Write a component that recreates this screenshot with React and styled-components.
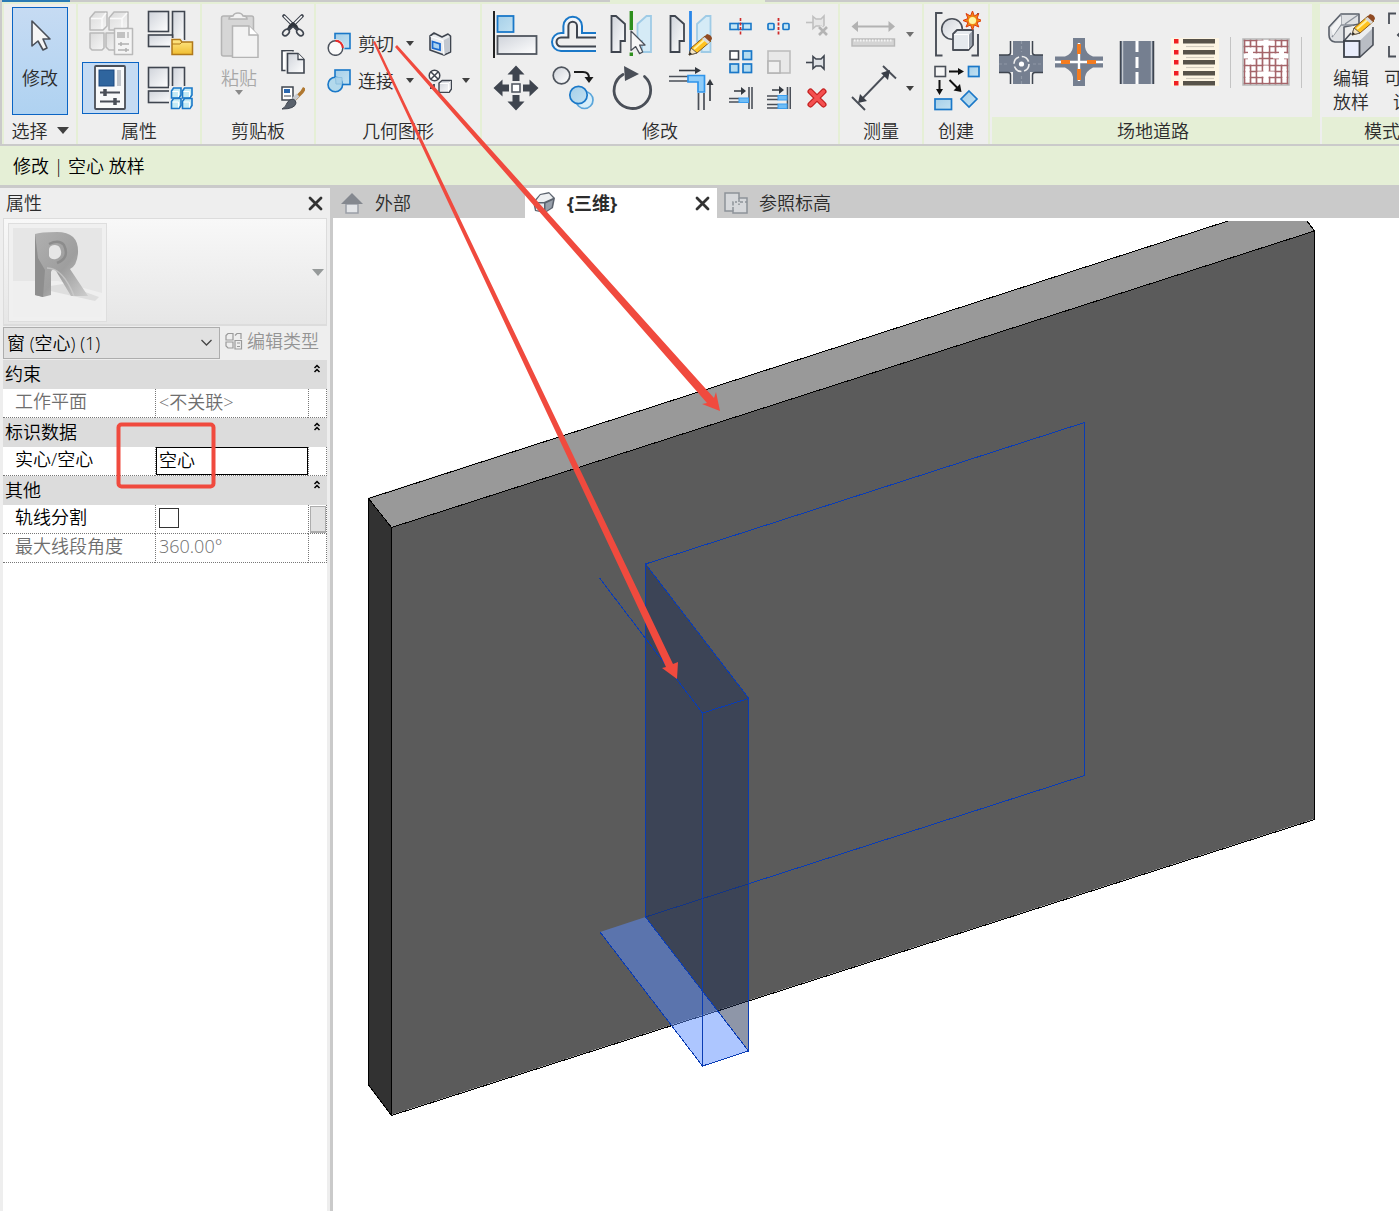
import React from 'react';
import styled, { createGlobalStyle } from 'styled-components';

const c = {
  panel: '#eeeeee',
  green: '#e5efd6',
  line: '#cacaca',
  text: '#2c2c2c',
  dim: '#949494',
  accent: '#0a64c4',
  ink: '#3f454f',
  blue: '#1a78c8',
  sky: '#aed8ee',
  red: '#f04a3e',
};

const GlobalStyle = createGlobalStyle`
  *, *::before, *::after { box-sizing: border-box; }
  html, body { margin: 0; padding: 0; }
  body {
    font-family: 'Open Sans', 'Noto Sans CJK SC', sans-serif;
    font-size: 18px;
    font-weight: 350;
    line-height: 24px;
    color: ${c.text};
    background: #fff;
    overflow: hidden;
  }
  button, input, select { font: inherit; color: inherit; margin: 0; padding: 0; border: 0; background: none; border-radius: 0; }
`;

const Page = styled.div`
  position: relative;
  display: flex;
  flex-direction: column;
  min-height: 100vh;
  overflow: hidden;
`;

/* ---------- ribbon ---------- */

const TabStrip = styled.div`
  display: flex;
  height: 2px;
  padding-left: 2px;
  background: ${c.line};
`;
const TabMark = styled.span`
  width: ${(p) => p.$width}px;
  margin-left: ${(p) => p.$gap || 0}px;
  background: ${(p) => p.$color};
`;
const Ribbon = styled.header`
  display: flex;
  gap: 2px;
  padding: 2px 0 0 2px;
  border-left: 2px solid ${c.line};
  border-bottom: 2px solid ${c.line};
  background: ${c.green};
  overflow: hidden;
`;
const Panel = styled.section`
  flex: none;
  display: flex;
  flex-direction: column;
  width: ${(p) => p.$width}px;
  background: ${c.panel};
`;
const PanelBody = styled.div`
  display: flex;
  align-items: ${(p) => p.$align || 'flex-start'};
  height: 113px;
  padding: 3px 0 0 ${(p) => p.$left || 0}px;
  border-right: ${(p) => p.$edge || 0}px solid ${c.green};
`;
const PanelLabel = styled.h2`
  display: flex;
  justify-content: center;
  align-items: center;
  gap: 9px;
  height: 27px;
  margin: 0 0 0 ${(p) => (p.$tinted ? 2 : 0)}px;
  padding-right: ${(p) => (p.$tinted ? 4 : 0)}px;
  font-size: 18px;
  font-weight: 350;
  background: ${(p) => (p.$tinted ? c.green : 'transparent')};
`;
const ToolGrid = styled.div`
  display: grid;
  grid-template-columns: repeat(${(p) => p.$cols}, ${(p) => p.$cell}px);
  grid-auto-rows: ${(p) => p.$row}px;
  gap: ${(p) => p.$gap || 0};
  margin: ${(p) => p.$top || 0}px 0 0 ${(p) => p.$left || 0}px;
`;
const Tool = styled.button`
  display: flex;
  align-items: center;
  justify-content: center;
  width: ${(p) => (p.$width ? p.$width + 'px' : 'auto')};
  height: ${(p) => (p.$width ? '54px' : 'auto')};
  background: ${(p) => (p.$on ? '#c5dbf3' : 'transparent')};
  outline: ${(p) => (p.$on ? `1px solid ${c.accent}` : 'none')};
  outline-offset: -1px;
`;
const TallTool = styled.button`
  flex: none;
  display: flex;
  flex-direction: column;
  align-items: center;
  width: ${(p) => p.$width}px;
  height: 108px;
  padding-top: 2px;
  border: 1px solid ${(p) => (p.$on ? c.accent : 'transparent')};
  background: ${(p) => (p.$on ? 'linear-gradient(#c6dbf3, #afd2f1)' : 'transparent')};
  color: ${(p) => (p.disabled ? '#a8a8a8' : c.text)};
  white-space: nowrap;
  > svg:first-child { margin-bottom: 8px; }
`;
const LabelledTool = styled.button`
  display: flex;
  align-items: center;
  gap: 7px;
`;
const SplitRow = styled.div`
  display: flex;
  align-items: center;
  height: 37px;
`;
const CaretButton = styled.button`
  display: flex;
  align-items: center;
  justify-content: center;
  width: ${(p) => p.$width || 20}px;
  height: ${(p) => p.$height || 37}px;
`;
const SplitColumn = styled.div`
  margin: 18px 0 0 ${(p) => p.$left}px;
`;
const Divider = styled.span`
  width: 1px;
  height: 51px;
  margin: 0 6px;
  background: #c4c4c4;
`;
const RoadTools = styled.div`
  display: flex;
  align-items: center;
`;
const OptionsBar = styled.div`
  display: flex;
  align-items: center;
  height: 42px;
  padding: 0 13px;
  color: #000;
  background: ${c.green};
  border-bottom: 3px solid ${c.line};
`;

/* ---------- workspace ---------- */

const Workspace = styled.div`
  flex: 1;
  display: flex;
`;
const Sidebar = styled.aside`
  flex: none;
  display: flex;
  flex-direction: column;
  width: 333px;
  padding: 0 3px;
  background: ${c.panel};
  border-right: 3px solid ${c.line};
`;
const SideTitle = styled.div`
  display: flex;
  align-items: center;
  justify-content: space-between;
  height: 30px;
  padding: 0 4px 0 3px;
`;
const CloseButton = styled.button`
  display: flex;
`;
const TypePreview = styled.button`
  display: flex;
  align-items: center;
  justify-content: space-between;
  height: 108px;
  padding: 2px 2px 0 4px;
  border: 1px solid #dcdcdc;
  border-bottom-width: 2px;
  background: linear-gradient(#f8f8f8, #e6e6e6);
`;
const Thumb = styled.span`
  display: block;
  width: 99px;
  height: 99px;
  padding: 4px;
  border: 1px solid #dedede;
  background: #f0f0f0;
`;
const TypeRow = styled.div`
  display: flex;
  justify-content: space-between;
  height: 34px;
  padding: 1px 8px 1px 0;
`;
const SelectBox = styled.div`
  display: grid;
  align-items: center;
  width: 217px;
  background: #e1e1e1;
  border: 1px solid #adadad;
  > * { grid-area: 1 / 1; }
  > svg { justify-self: end; margin-right: 6px; pointer-events: none; }
`;
const TypeSelect = styled.select`
  appearance: none;
  width: 100%;
  height: 30px;
  padding-left: 3px;
  color: #000;
`;
const EditType = styled.button`
  display: flex;
  align-items: center;
  gap: 4px;
  height: 28px;
  color: ${c.dim};
`;
const Properties = styled.div`
  flex: 1;
  background: #fff;
`;
const PropTable = styled.table`
  width: 100%;
  table-layout: fixed;
  border-collapse: separate;
  border-spacing: 0;
  color: #000;
`;
const GroupCell = styled.th`
  height: 29px;
  padding: 0 6px 2px 2px;
  text-align: left;
  font-weight: 350;
  background: #dcdcdc;
`;
const GroupHead = styled.div`
  display: flex;
  align-items: center;
  justify-content: space-between;
`;
const FoldButton = styled.button`
  display: flex;
  padding-bottom: 11px;
`;
const NameCell = styled.th`
  height: 29px;
  padding: 0 0 4px 12px;
  text-align: left;
  font-weight: 350;
  color: ${(p) => (p.$dim ? '#6e6e6e' : '#000')};
  border-bottom: 1px dotted #777;
`;
const Cell = styled.td`
  height: 29px;
  padding: 0;
  border-left: 1px dotted #777;
  border-bottom: 1px dotted #777;
  ${(p) => p.$last && 'border-right: 1px dotted #777;'}
`;
const ValueInput = styled.input`
  display: block;
  width: 100%;
  height: 28px;
  padding: 0 2px 4px;
  border: 1px solid ${(p) => (p.$active ? '#000' : 'transparent')};
  color: #000;
  outline: none;
  &:disabled { color: #6e6e6e; }
`;
const TickBox = styled.input`
  display: block;
  appearance: none;
  width: 20px;
  height: 20px;
  margin: 0 0 2px 3px;
  border: 1px solid #333;
  background: #fff;
`;
const RowButton = styled.button`
  display: block;
  width: 16px;
  height: 27px;
  margin-left: 1px;
  background: #e1e1e1;
  border: 1px solid #adadad;
  border-bottom-width: 2px;
`;
const Main = styled.main`
  flex: 1;
  display: flex;
  flex-direction: column;
  min-width: 0;
`;
const ViewTabs = styled.nav`
  display: flex;
  height: 30px;
  background: ${c.line};
`;
const ViewTab = styled.div`
  display: flex;
  align-items: center;
  justify-content: space-between;
  width: 192px;
  padding: 0 7px;
  background: ${(p) => (p.$active ? '#fff' : 'transparent')};
`;
const ViewTabButton = styled.button`
  display: flex;
  align-items: center;
  gap: 11px;
  font-weight: ${(p) => (p.$active ? 700 : 350)};
`;
const Canvas = styled.div`
  flex: 1;
  overflow: hidden;
  background: #fff;
`;
const Drawing = styled.svg`
  display: block;
  flex: none;
  overflow: hidden;
`;
const Markup = styled.svg`
  position: absolute;
  top: 0;
  left: 0;
  pointer-events: none;
`;
const SharedDefs = styled.svg`
  position: absolute;
`;

/* ---------- icon drawings ---------- */

const Icon = ({ size = 48, w, h, children }) => (
  <Drawing width={w || size} height={h || size} viewBox={`0 0 ${w || size} ${h || size}`} fill="none" aria-hidden="true">
    {children}
  </Drawing>
);

const Caret = ({ w = 8, color = '#404040' }) => (
  <Icon w={w} h={w / 2 + 1}><path d={`M0 0H${w}L${w / 2} ${w / 2 + 1}Z`} fill={color} /></Icon>
);
const Cross = ({ size = 15 }) => (
  <Icon size={size}><path d="M2 2L13 13M13 2L2 13" stroke="#333" strokeWidth="2.8" strokeLinecap="round" /></Icon>
);
const Defs = () => (
  <SharedDefs width="0" height="0" aria-hidden="true">
    <defs>
      <linearGradient id="steel" x1="0" y1="0" x2="1" y2="1"><stop offset="0" stopColor="#cfd3da" /><stop offset="1" stopColor="#fff" /></linearGradient>
      <linearGradient id="pale" x1="0" y1="0" x2="1" y2="1"><stop offset="0" stopColor="#dadada" /><stop offset="1" stopColor="#f6f6f6" /></linearGradient>
      <linearGradient id="sky" x1="0" y1="0" x2="1" y2="1"><stop offset="0" stopColor="#a6cfe8" /><stop offset="1" stopColor="#c3e2f2" /></linearGradient>
      <linearGradient id="gold" x1="0" y1="0" x2="0" y2="1"><stop offset="0" stopColor="#ffe88a" /><stop offset="1" stopColor="#f0bd30" /></linearGradient>
      <linearGradient id="letter" x1="0" y1="0" x2="1" y2="1"><stop offset="0" stopColor="#b0b0b0" /><stop offset=".55" stopColor="#9e9e9e" /><stop offset="1" stopColor="#cecece" /></linearGradient>
    </defs>
  </SharedDefs>
);

const Pointer = ({ x, y, s = 1 }) => (
  <path transform={`translate(${x} ${y}) scale(${s})`} d="M0 0V25L6 20L11 29L15 27L11 18H18Z" fill="#f6f6f6" stroke="#4a4f58" strokeWidth="1.6" strokeLinejoin="round" />
);
const Pencil = ({ x = 0, y = 0 }) => (
  <g transform={`translate(${x} ${y})`}>
    <path d="M0 21L2 14L16 2L22 7L8 19Z" fill="#ffc21e" stroke="#8a5a1c" strokeWidth="1" />
    <path d="M5 15L17 4.500" stroke="#fff0a0" strokeWidth="2" />
    <path d="M14 4L18 0Q23 1 23 5L19.500 9Z" fill="#8f4a22" />
    <path d="M13 5L15.500 3L21 8L19 10Z" fill="#d8dadc" />
    <path d="M0 21L2 14L8 19Z" fill="#f7e6c4" stroke="#4a4a4a" strokeWidth=".8" />
    <path d="M0 21L.8 18L3 20Z" fill="#222" />
  </g>
);

const ModifyIcon = () => <Icon><Pointer x={16} y={11} /></Icon>;

const TypePropsIcon = () => (
  <Icon>
    <g fill="url(#pale)" stroke="#b9b9b9" strokeWidth="1.500" strokeLinejoin="round">
      <path d="M3 9L8 3H20V17L16 21H3Z" /><path d="M22 9L27 3H41V19L36 21H22Z" />
      <path d="M3 24H17V39L15 41H5L3 39Z" /><path d="M19 24H33V41H22L19 38Z" />
      <path d="M4 9.500H15L19 4M15 9.500V20M23 9.500H35L40 4M35 9.500V20" fill="none" stroke="#fafafa" />
      <rect x="27.500" y="19.500" width="18" height="26" fill="#f4f4f4" />
    </g>
    <rect x="30" y="23" width="8" height="6" fill="#c2c2c2" /><path d="M41 23V29" stroke="#ccc" strokeWidth="2" />
    <path d="M31 35H42M31 41H42M34 33V37M39 39V43" stroke="#b0b0b0" strokeWidth="1.500" />
  </Icon>
);
const Windows = ({ dy = 0 }) => (
  <g transform={`translate(0 ${dy})`} fill="url(#steel)" stroke={c.ink} strokeWidth="1.600">
    <rect x="2.500" y="2.500" width="20" height="20" /><path d="M26.500 2.500H38.500V34H26.500Z" /><rect x="2.500" y="26" width="24" height="11.500" />
  </g>
);
const FamilyFolderIcon = () => (
  <Icon><Windows />
    <path d="M26 31H35L37 33H46V45.500H26Z" fill="url(#gold)" stroke="#eee" strokeWidth="4" />
    <path d="M26 30.500H34L36 33H46.500V45.500H26Z" fill="url(#gold)" stroke="#b0781a" strokeWidth="1.500" /><path d="M26 35H34L36 33" stroke="#b0781a" />
  </Icon>
);
const PropertiesIcon = () => (
  <Icon>
    <rect x="8" y="2" width="30" height="43" rx="1" fill="#f8f9fa" stroke="#4a4f58" strokeWidth="1.800" />
    <rect x="12" y="6" width="15" height="16" fill="#2f659e" stroke="#1d4a82" /><rect x="30" y="6" width="4" height="16" fill="#c3c7cd" />
    <path d="M13 28.500H33M13 37.500H33" stroke="#4a4f58" strokeWidth="1.800" /><path d="M18 25V32M28 34V41" stroke="#4a4f58" strokeWidth="3.500" />
  </Icon>
);
const FamilyTypesIcon = () => (
  <Icon><Windows dy={1} />
    <rect x="23" y="22" width="25" height="25" fill="#eee" />
    <g fill="#c4ebf5" stroke={c.blue} strokeWidth="1.600">{[[25.5, 25], [36.5, 25], [25.5, 35.5], [36.5, 35.5]].map(([x, y]) => <g key={`${x}-${y}`}><path d={`M${x} ${y + 2}L${x + 2} ${y - 1}H${x + 9.5}V${y + 6}L${x + 7.5} ${y + 9}H${x}Z`} /><path d={`M${x + 1} ${y + 2.5}H${x + 7}V${y + 8}`} stroke="#fff" strokeWidth="1" fill="none" /></g>)}</g>
  </Icon>
);
const PasteIcon = () => (
  <Icon>
    <rect x="6.500" y="6" width="32" height="40" rx="2" fill="#d6d6d6" stroke="#b4b4b4" strokeWidth="1.500" />
    <path d="M14 9Q14 6 18 6Q19 3 23 3Q27 3 28 6Q32 6 32 9Z" fill="#f2f2f2" stroke="#b4b4b4" strokeWidth="1.500" />
    <path d="M17.500 16H34L43 25V47.500H17.500Z" fill="#f3f3f3" stroke="#b4b4b4" strokeWidth="1.500" /><path d="M34 16V25H43" fill="#fff" stroke="#b4b4b4" strokeWidth="1.500" />
  </Icon>
);
const CutIcon = () => (
  <Icon size={24}>
    <path d="M3 2L18 17M21 2L6 17" stroke={c.ink} strokeWidth="3.600" strokeLinecap="round" /><path d="M3.500 2.500L10 9M20.500 2.500L14 9" stroke="#fff" strokeWidth="1.500" strokeLinecap="round" />
    <path d="M8 11L12 8L16 11L18 15L12 12L6 15Z" fill="#2e333b" />
    <ellipse cx="5" cy="18.500" rx="3.800" ry="2.600" transform="rotate(-45 5 18.500)" fill="#eee" stroke={c.ink} strokeWidth="1.600" /><ellipse cx="19" cy="18.500" rx="3.800" ry="2.600" transform="rotate(45 19 18.500)" fill="#eee" stroke={c.ink} strokeWidth="1.600" />
  </Icon>
);
const CopyClipIcon = () => (
  <Icon size={24}>
    <path d="M1 .8H12V20.500H1Z" fill="#fff" stroke={c.ink} strokeWidth="1.600" />
    <path d="M6.500 3.500H17L23 9.500V23H6.500Z" fill="url(#steel)" stroke="#eee" strokeWidth="4" /><path d="M6.500 3.500H17L23 9.500V23H6.500Z" fill="url(#steel)" stroke={c.ink} strokeWidth="1.600" /><path d="M17 3.500V9.500H23" fill="#fff" stroke={c.ink} strokeWidth="1.300" />
  </Icon>
);
const MatchIcon = () => (
  <Icon size={24}>
    <rect x="1" y="1" width="11" height="13" fill="#fff" stroke={c.ink} strokeWidth="1.500" /><rect x="3" y="3" width="6" height="4" fill="#2b68b0" /><path d="M3 10H10" stroke={c.ink} />
    <path d="M14 13L21 6L23.500 2" stroke="#b07830" strokeWidth="3.500" /><path d="M12 14L17 9" stroke="#c9ccd1" strokeWidth="4" />
    <path d="M1 23Q5 21 6 17Q8 13 12 13Q15 14 15 17Q14 23 1 23Z" fill="#59616c" stroke={c.ink} />
  </Icon>
);
const CutGeomIcon = () => (
  <Icon size={24}>
    <rect x="8" y="1.500" width="15" height="15" fill="url(#sky)" stroke={c.blue} strokeWidth="1.600" /><circle cx="8.500" cy="16" r="9" fill="#eee" />
    <circle cx="8.500" cy="16" r="7.300" fill="#fafafa" stroke="#4c525c" strokeWidth="1.500" /><path d="M8.500 8.700A7.300 7.300 0 0 1 15.800 16" stroke="#f02a2a" strokeWidth="2" />
  </Icon>
);
const JoinIcon = () => (
  <Icon size={24}>
    <rect x="8" y="1" width="15" height="14.500" fill="url(#sky)" stroke={c.blue} strokeWidth="1.600" /><circle cx="8.300" cy="15.500" r="7.300" fill="#b3d9ec" stroke={c.blue} strokeWidth="1.600" />
    <path d="M8.500 8.500H15V15H9Z" fill="#a9d2ea" stroke="#8cc0df" />
  </Icon>
);
const WallOpeningIcon = () => (
  <Icon size={24}>
    <path d="M2 4L6 1L14 5L20 2L22.500 4V20L16 23L2 18Z" fill="#e9ecef" stroke={c.ink} strokeWidth="1.600" strokeLinejoin="round" /><path d="M15 8.500L22 5V19.500L16 22Z" fill="#c3c8cf" /><path d="M2.500 4.500L15 8.500L16 23" stroke="#fff" strokeWidth="1.200" />
    <path d="M4.500 9.500L12 12V18L4.500 16Z" fill="#a9d2f0" stroke="#1a6bd0" strokeWidth="1.800" />
  </Icon>
);
const SplitFaceIcon = () => (
  <Icon size={24}>
    <circle cx="6.500" cy="6.500" r="5.300" fill="#fff" stroke={c.ink} strokeWidth="1.500" /><path d="M3 3L10 10M10 3L3 10" stroke={c.ink} strokeWidth="1.500" />
    <path d="M1 14L6 19V15M6 19H2" stroke={c.ink} strokeWidth="1.800" />
    <path d="M11 14L14 11.500H23.500V20L21 23.500H11Z" fill="url(#steel)" stroke={c.ink} strokeWidth="1.400" strokeLinejoin="round" /><path d="M12 14.500H20.500V22.500M20.500 14.500L22.500 12.500" stroke="#fff" />
  </Icon>
);
const AlignIcon = () => (
  <Icon>
    <path d="M2 1V48" stroke="#222" strokeWidth="2" /><rect x="5.500" y="6" width="16" height="16" fill="url(#sky)" stroke={c.blue} strokeWidth="1.800" /><rect x="5.500" y="26" width="39" height="18" fill="url(#steel)" stroke="#4f555e" strokeWidth="1.800" />
  </Icon>
);
const OffsetIcon = () => (
  <Icon>
    <path d="M46 23H32V16A9.300 9.300 0 0 0 13.400 16V23H11A9 9 0 0 0 11 41H46" fill="#f2f6fa" stroke={c.blue} strokeWidth="2" />
    <path d="M46 27.500H27V16A4.300 4.300 0 0 0 18.400 16V27.500H11A4.300 4.300 0 0 0 11 36.500H46" fill="#eee" stroke={c.ink} strokeWidth="2" />
  </Icon>
);
const mirrorHalf = 'M3.500 6H8L17 14V31H12.500V42H3.500Z';
const MirrorPickIcon = () => (
  <Icon>
    <path d={mirrorHalf} fill="url(#steel)" stroke={c.ink} strokeWidth="1.800" /><path d={mirrorHalf} transform="matrix(-1 0 0 1 46.500 0)" fill="#d5ebf6" stroke="#9fcbe6" strokeWidth="1.800" />
    <path d="M23.300 1V20M23.300 42.500V46" stroke="#2f8f1e" strokeWidth="3.400" /><Pointer x={23} y={21} s={0.78} />
  </Icon>
);
const MirrorDrawIcon = () => (
  <Icon>
    <path d={mirrorHalf} transform="translate(1 0)" fill="url(#steel)" stroke={c.ink} strokeWidth="1.800" /><path d={mirrorHalf} transform="matrix(-1 0 0 1 48 0)" fill="#d5ebf6" stroke="#9fcbe6" strokeWidth="1.800" />
    <path d="M24.500 1V42" stroke="#2a86e8" strokeWidth="2.800" /><Pencil x={23} y={24} />
  </Icon>
);
const MoveIcon = () => (
  <Icon>
    {[0, 90, 180, 270].map((a) => <path key={a} transform={`rotate(${a} 24 24)`} d="M24 1.500L32.500 10.500H27.500V17H20.500V10.500H15.500Z" fill={c.ink} />)}
    <rect x="20" y="20" width="8" height="8" fill="#fff" stroke="#555b64" strokeWidth="1.600" />
  </Icon>
);
const CopyIcon = () => (
  <Icon>
    <circle cx="11.500" cy="11.500" r="8.300" fill="url(#steel)" stroke="#4f555e" strokeWidth="1.700" /><path d="M24 8H33Q39 8 39 14" stroke="#1c1c1c" strokeWidth="2" /><path d="M34.500 13H43.500L39 19Z" fill="#1c1c1c" />
    <circle cx="34.500" cy="36" r="8.500" fill="#d7eefa" stroke="#5aa5da" strokeWidth="1.700" /><circle cx="28.500" cy="31" r="8.700" fill="url(#sky)" stroke={c.blue} strokeWidth="1.700" />
  </Icon>
);
const RotateIcon = () => (
  <Icon><path d="M36.500 12.500A18.300 18.300 0 1 1 15 10.500" stroke="#4a4f58" strokeWidth="2.800" strokeLinecap="round" /><path d="M16 2L31 10L17 17Z" fill="#4a4f58" /></Icon>
);
const TrimIcon = () => (
  <Icon>
    <path d="M13 6.500H30" stroke="#33383f" strokeWidth="1.600" /><path d="M29 3L35 6.500L29 10Z" fill="#33383f" />
    <path d="M3 12.500H22M3 17H22M32.500 29V46M38 29V46" stroke="#4a4f58" strokeWidth="1.700" />
    <path d="M22 11.500H38.500V28H32V18H22Z" fill="#8fccf8" stroke="#2f94ea" strokeWidth="1.700" />
    <path d="M44 37V20" stroke="#33383f" strokeWidth="1.600" /><path d="M40.500 21L44 15L47.500 21Z" fill="#33383f" />
  </Icon>
);
const SplitIcon = () => (
  <Icon size={24}><rect x="1" y="9.500" width="8" height="6" fill="#c5e6f5" stroke={c.blue} strokeWidth="1.600" /><rect x="14" y="9.500" width="8" height="6" fill="#c5e6f5" stroke={c.blue} strokeWidth="1.600" /><path d="M9 9.500H14M9 15.500H14" stroke={c.blue} strokeWidth="1.600" /><path d="M11.500 4V21" stroke="#d02a2a" strokeWidth="1.600" strokeDasharray="3 1.500" /></Icon>
);
const SplitGapIcon = () => (
  <Icon size={24}><rect x="1" y="9.500" width="6" height="6" rx="1" fill="#c5e6f5" stroke={c.blue} strokeWidth="1.700" /><rect x="16" y="9.500" width="6" height="6" rx="1" fill="#c5e6f5" stroke={c.blue} strokeWidth="1.700" /><path d="M11.500 4V21" stroke="#d02a2a" strokeWidth="1.800" strokeDasharray="3 1.500" /></Icon>
);
const PinShape = ({ color, fill }) => (
  <><path d="M1 12.500H8" stroke={color} strokeWidth="1.600" /><path d="M8 6.500L11 9H16L19 6V19L16 16H11L8 18.500Z" fill={fill} stroke={color} strokeWidth="1.600" /></>
);
const PinIcon = () => <Icon size={24}><PinShape color={c.ink} fill="#dfe2e6" /></Icon>;
const UnpinIcon = () => (
  <Icon size={24}><g transform="translate(0 -4)"><PinShape color="#c0c0c0" fill="#e6e6e6" /></g><path d="M14 13L22 21M22 13L14 21" stroke="#eee" strokeWidth="5" /><path d="M14 13L22 21M22 13L14 21" stroke="#b4b4b4" strokeWidth="2.600" /></Icon>
);
const ArrayIcon = () => (
  <Icon size={24}><rect x="1" y="1" width="8.500" height="8.500" fill="#fff" stroke={c.ink} strokeWidth="1.600" />{[[14, 1], [1, 14], [14, 14]].map(([x, y]) => <rect key={`${x}-${y}`} x={x} y={y} width="8.500" height="8.500" fill="#b5dcf0" stroke={c.blue} strokeWidth="1.700" />)}</Icon>
);
const ScaleIcon = () => (
  <Icon size={24}><rect x="1" y="1" width="22" height="22" fill="#e8e8e8" stroke="#bdbdbd" strokeWidth="1.600" /><rect x="1" y="11" width="12" height="12" fill="#efefef" stroke="#b5b5b5" strokeWidth="1.600" /></Icon>
);
const ExtendOneIcon = () => (
  <Icon size={24}><path d="M5 5H14" stroke="#33383f" strokeWidth="1.500" /><path d="M12 1L17 5L12 9Z" fill="#33383f" /><path d="M0 12.500H10M0 16H10M20 1V23M23 1V23" stroke="#4a4f58" strokeWidth="1.600" /><rect x="10" y="12" width="9.500" height="4.500" fill="#6fbdf6" stroke="#3a9ef0" /></Icon>
);
const ExtendManyIcon = () => (
  <Icon size={24}><path d="M5 4H14" stroke="#33383f" strokeWidth="1.500" /><path d="M12 0L17 4L12 8Z" fill="#33383f" /><path d="M0 10H11M0 13.500H11M0 18.500H11M0 22H11M20.500 1V23M23.300 1V23" stroke="#4a4f58" strokeWidth="1.600" /><g fill="#6fbdf6" stroke="#3a9ef0"><rect x="11" y="9.500" width="9" height="4.500" /><rect x="11" y="18" width="9" height="4.500" /></g></Icon>
);
const DeleteIcon = () => (
  <Icon size={24}><path d="M5.500 5.500L18.500 18.500M18.500 5.500L5.500 18.500" stroke="#c42020" strokeWidth="6" strokeLinecap="round" /><path d="M5.500 5.500L18.500 18.500M18.500 5.500L5.500 18.500" stroke="#f45050" strokeWidth="3.600" strokeLinecap="round" /></Icon>
);
const MeasureIcon = () => (
  <Icon><path d="M7 16.500H41" stroke="#b2b2b2" strokeWidth="2" /><path d="M2.500 16.500L9 11V22ZM46 16.500L39.500 11V22Z" fill="#b2b2b2" /><rect x="3" y="29" width="42.500" height="7" fill="#d4d4d4" stroke="#b8b8b8" strokeWidth="1.400" /><path d="M5 30.500H44" stroke="#f4f4f4" strokeWidth="2" strokeDasharray="1.500 1.500" /></Icon>
);
const DimensionIcon = () => (
  <Icon><path d="M11 37L39 8M3 33L16 46M34 2L47 14.500" stroke="#4a4f58" strokeWidth="1.900" /><path d="M9 39L11 30L18 37ZM41 6L32 9L39 16Z" fill="#3a3f48" /></Icon>
);
const CreateGroupIcon = () => (
  <Icon>
    <path d="M9.500 3H3V45.500H9.500M38.500 45.500H45V24M45 3V5" stroke="#4a4f58" strokeWidth="1.900" /><circle cx="19" cy="19" r="10.300" fill="url(#steel)" stroke="#4a4f58" strokeWidth="1.600" />
    <path d="M20 24L24 20H40V35L35.500 40H20Z" fill="#e6eaee" stroke="#4a4f58" strokeWidth="1.800" strokeLinejoin="round" /><path d="M36 24.500L39 21.500V34.500L36 38Z" fill="#9aa1ab" /><path d="M21 24.500H35.500V39" stroke="#fff" />
    <path d="M39.500 1L41.300 6L45.800 3.500L44 8.500L49 10.500L44 12.500L45.800 17L41.300 15L39.500 20L37.500 15L33 17L35 12.500L30 10.500L35 8.500L33 3.500L37.500 6Z" fill="#f08a10" stroke="#e03a10" strokeWidth="1" /><circle cx="39.500" cy="10.500" r="3.600" fill="#fff6a0" />
  </Icon>
);
const CreateSimilarIcon = () => (
  <Icon>
    <rect x="2" y="2.500" width="10.500" height="10" fill="#f6f6f6" stroke="#4a4f58" strokeWidth="1.600" /><path d="M16 7.500H26M6.500 16V26M16.500 16L25 24.500" stroke="#111" strokeWidth="2" /><path d="M25 4L31 7.500L25 11ZM3 25L6.500 31L10 25ZM28.500 28L27 20L20.500 26.500Z" fill="#111" />
    <g stroke={c.blue} strokeWidth="1.700" fill="url(#sky)"><rect x="35.500" y="2.500" width="10.500" height="10" /><rect x="2" y="35" width="16.500" height="10.500" /><path d="M36 27L44 35L36 43L28 35Z" /></g>
  </Icon>
);
const road = '#757f90';
const RoundaboutIcon = () => (
  <Icon>
    <path d="M16 3H33V17H46V34H33V46H16V34H2V17H16Z" fill={road} />
    <path d="M13.500 3V14.500Q13.500 17 11 17H2M35.500 3V14.500Q35.500 17 38 17H46M13.500 46V37Q13.500 34.500 11 34.500H2M35.500 46V37Q35.500 34.500 38 34.500H46" stroke="#3f454f" strokeWidth="1.500" />
    <circle cx="24.500" cy="26" r="7.500" stroke="#eee" strokeWidth="1.600" strokeDasharray="9 2.800" /><circle cx="24.500" cy="26" r="2.600" fill="#fff" /><path d="M24.500 3V14M24.500 38V46M2 26H12M36 26H46" stroke="#8f98a6" strokeWidth="1.200" strokeDasharray="3 2" />
  </Icon>
);
const CrossroadIcon = () => (
  <Icon>
    <path d="M18 0H30V9Q31 16 38 18.500H48V29.500H38Q31 33 30 39V48H18V39Q17 33 10 29.500H0V18.500H10Q17 16 18 9Z" fill={road} /><path d="M24 5V43M0 24H48" stroke="#fff" strokeWidth="2.400" />
    <path d="M24 6V16M24 31V42M6 24H15M32 24H41" stroke="#f47c20" strokeWidth="4" />
  </Icon>
);
const StraightRoadIcon = () => (
  <Icon><rect x="7" y="3" width="34" height="43" fill={road} /><path d="M7.500 3V46M40.500 3V46" stroke="#3f454f" strokeWidth="1.500" /><path d="M9.700 3V46M38.300 3V46" stroke="#d5d9de" strokeWidth="1" /><path d="M24 3V14M24 19V30M24 34V46" stroke="#fff" strokeWidth="3" /></Icon>
);
const ParkingIcon = () => (
  <Icon>
    <rect width="48" height="48" fill="#fdf5e4" />
    {[1, 12, 22, 33, 43].map((y) => <g key={y}><rect x="3" y={y} width="4.500" height="4.500" fill="#f02020" /><rect x="12" y={y} width="32" height="4.500" fill="#575249" /></g>)}
    {[8, 19, 29, 40].map((y) => <path key={y} d={`M15 ${y}.500H43`} stroke="#d2cbbd" strokeWidth="1.200" />)}
  </Icon>
);
const latticeLines = [2.5, 8.5, 14.5, 20.5, 27.5, 33.5, 39.5, 45.5];
const latticeGaps = [[24, 5], [24, 36], [8.5, 18], [39.5, 18]];
const LatticeIcon = () => (
  <Icon>
    <rect x=".5" y=".5" width="47" height="47" fill="#fff" />
    {latticeLines.map((v) => <path key={v} d={`M${v} 1V47M1 ${v}H47`} stroke="#a5656a" strokeWidth="1.700" />)}
    {latticeGaps.map(([x, y]) => <path key={`${x}-${y}`} transform={`translate(${x} ${y})`} d="M-2.500 -8.500H2.500V-2.500H8.500V2.500H2.500V8.500H-2.500V2.500H-8.500V-2.500H-2.500Z" fill="#fff" />)}
    {[[5.5, 36], [42.5, 36]].map(([x, y]) => <rect key={x} x={x - 2} y={y - 5} width="4" height="10" fill="#fff" />)}
    <rect x="1" y="1" width="46" height="46" stroke="#b5b5b5" strokeWidth="1.500" />
  </Icon>
);
const EditSweepIcon = () => (
  <Icon>
    <path d="M2 17L14 4H32V14L17 17V32H8Q2 31 2 25Z" fill="#dfe1e4" stroke="#5a606a" strokeWidth="1.600" strokeLinejoin="round" />
    <path d="M14 4V15L5 27M18 14L31 5M14 15H26" stroke="#8a9099" strokeWidth="1.300" /><path d="M4 18L14 6V14L6 26Z" fill="#f3f4f5" />
    <path d="M17 31L26 20L46 17V35L32.500 47V31Z" fill="#eceef0" /><path d="M32.500 31L46 18V35L32.500 47Z" fill="#b9bdc4" />
    <path d="M46 17V35L33 47M17 31L24 23" stroke="#4a4f58" strokeWidth="1.600" /><rect x="17" y="31" width="15.500" height="16" fill="#e9edfb" stroke="#3a3f48" strokeWidth="1.800" /><Pencil x={25} y={4} />
  </Icon>
);
const VisibilityIcon = () => (
  <Icon><path d="M9 3.500H2V14M2 36V46.500H9M39 3.500H46V14M46 36V46.500H39" stroke="#4a4f58" strokeWidth="1.800" /><path d="M11 25Q24 10 37 25Q24 38 11 25Z" fill="url(#steel)" stroke="#4a4f58" strokeWidth="2" /><circle cx="24" cy="25" r="5" fill="#4a4f58" /></Icon>
);
const FamilyLogo = () => (
  <Icon size={89}>
    <rect width="89" height="89" fill="#efefef" /><path d="M0 0H89V65L45 53H0Z" fill="#e6e6e6" />
    <path d="M24 60L50 56L86 69L82 73Z" fill="#dedede" />
    <path fillRule="evenodd" d="M22 6Q27 4 44 4Q66 4 65 25Q64 38 57 41L75 68L58 68L43 43Q39 40 38 44V67L30 69L22 67ZM42 17Q37 17 36 21V28Q38 32 43 31Q49 29 48 23Q47 17 42 17Z" fill="url(#letter)" />
    <path d="M22 6L25 30L32 42L30 69L22 67Z" fill="#8e8e8e" /><path d="M36 16Q46 11 51 17Q57 30 44 35" stroke="#8c8c8c" strokeWidth="2.500" /><path d="M34 40Q50 40 61 68" stroke="#cfcfcf" strokeWidth="1.500" opacity=".7" />
  </Icon>
);
const EditTypeIcon = () => (
  <Icon size={18}><path d="M1 3.500L3 1.500H8V8H1ZM10 3.500L12 1.500H16V7M1 10H8V16H3L1 14ZM10 8.500H16.500V17H10Z" stroke="#9a9a9a" strokeWidth="1.200" /><path d="M12 11H15M12 14.500H15" stroke="#9a9a9a" strokeWidth="1.200" /></Icon>
);
const FoldIcon = () => <Icon w={8} h={9}><path d="M1.500 4L4 1.500L6.500 4M1.500 8L4 5.500L6.500 8" stroke="#000" strokeWidth="1.500" /></Icon>;
const HomeIcon = () => <Icon size={24}><path d="M6 13H18V22H6Z" fill="#e3e5e8" stroke="#9a9ea6" strokeWidth="1.500" /><path d="M12 2L23 13H1Z" fill="#84888f" /></Icon>;
const CubeIcon = () => (
  <Icon size={24}><path d="M1 11L8 3L17 1L23 7L21 17L13 22L3 20Z" fill="#5c636e" /><path d="M3 11L8.500 4L17 2.500L21 7L12 11Z" fill="#eef0f2" /><path d="M3.500 12.500L12 12.500V20.500L4 19Z" fill="#e9ebee" /><path d="M13.500 12.500L21 9L19.500 16.500L13.500 20.500Z" fill="#98a0ab" /></Icon>
);
const PlanIcon = () => <Icon size={24}><path d="M1 2H15V7H23V22H9V20H1Z" fill="#d6d8db" stroke="#8d9299" strokeWidth="1.500" /><path d="M9 20V11H13M15 7V14M16 11H19M21 11H23" stroke="#8d9299" strokeWidth="1.500" strokeDasharray="4 1.500" /></Icon>;

/* ---------- 3D view ---------- */

const edge = '#0a3cb4';
const Model = () => (
  <Drawing width="1066" height="993" viewBox="333 218 1066 993" role="img" aria-label="三维视图">
    <path d="M368 498L1228 221H1307L1314 231L391 527Z" fill="#999999" />
    <path d="M391 527L1314 231V819L391 1115Z" fill="#5b5b5b" />
    <path d="M368 498L391 527V1115L368 1085Z" fill="#323232" />
    <path d="M1228 221L368.500 498.500V1085L391.500 1115.500L1314.500 819.500V231L1307 221M1314.500 231L391.500 527.500V1115M368.500 498.500L391.500 527.500" fill="none" stroke="#000" shapeRendering="crispEdges" />
    <path d="M645.500 917L1084.500 775.500V422.500L645.500 564M599.500 578L702.500 713" fill="none" stroke={edge} shapeRendering="crispEdges" />
    <path d="M645.500 564L748.500 698V1051L645.500 917Z" fill="rgb(29,45,81)" fillOpacity=".5" />
    <path d="M600 932L645.500 917L748.500 1051L702.500 1066Z" fill="rgb(91,142,255)" fillOpacity=".5" />
    <path d="M599.500 578L702.500 713L748.500 698.500M645.500 917V564L748.500 698V1051L702.500 1066V713M600 932L702.500 1066M645.500 917L748.500 1051" fill="none" stroke={edge} shapeRendering="crispEdges" />
  </Drawing>
);

const Annotations = () => (
  <Markup width="760" height="700" viewBox="0 0 760 700" fill={c.red} aria-hidden="true">
    <path d="M373 42L375 41L673 664L678 662L677 679L662 668L666 667Z" />
    <path d="M395 47L397 45L714 398L716 392L720 411L702 404L707 403Z" />
    <rect x="118.500" y="424.500" width="95" height="62" rx="3" fill="none" stroke={c.red} strokeWidth="4" />
  </Markup>
);

const transformTools = [
  ['对齐', AlignIcon], ['偏移', OffsetIcon], ['镜像 - 拾取轴', MirrorPickIcon], ['镜像 - 绘制轴', MirrorDrawIcon],
  ['移动', MoveIcon], ['复制', CopyIcon], ['旋转', RotateIcon], ['修剪/延伸为角', TrimIcon],
];
const detailTools = [
  ['拆分图元', SplitIcon], ['用间隙拆分', SplitGapIcon], ['解锁', UnpinIcon], ['阵列', ArrayIcon], ['缩放', ScaleIcon],
  ['锁定', PinIcon], ['修剪/延伸单个图元', ExtendOneIcon], ['修剪/延伸多个图元', ExtendManyIcon], ['删除', DeleteIcon],
];
const clipTools = [['剪切到剪贴板', CutIcon], ['复制到剪贴板', CopyClipIcon], ['匹配类型', MatchIcon]];
const roadTools = [['环岛', RoundaboutIcon], ['十字路口', CrossroadIcon], ['直路', StraightRoadIcon], ['停车位', ParkingIcon]];

const Tools = ({ items, width }) => items.map(([name, Glyph]) => (
  <Tool key={name} aria-label={name} $width={width}><Glyph /></Tool>
));

const Group = ({ title }) => (
  <tr>
    <GroupCell colSpan={3} scope="colgroup">
      <GroupHead>{title}<FoldButton aria-label={`折叠${title}`}><FoldIcon /></FoldButton></GroupHead>
    </GroupCell>
  </tr>
);
const Row = ({ id, name, dim, children, action }) => (
  <tr>
    <NameCell scope="row" $dim={dim}><label htmlFor={id}>{name}</label></NameCell>
    <Cell>{children}</Cell>
    <Cell $last>{action}</Cell>
  </tr>
);

export default function App() {
  return (
    <Page>
      <GlobalStyle />
      <Defs />
      <TabStrip>
        <TabMark $width={68} $color="#2a7ab5" />
        <TabMark $width={155} $gap={540} $color={c.green} />
      </TabStrip>
      <Ribbon>
        <Panel $width={72}>
          <PanelBody $left={8}>
            <TallTool $width={56} $on><ModifyIcon />修改</TallTool>
          </PanelBody>
          <PanelLabel>选择<Caret w={12} /></PanelLabel>
        </Panel>
        <Panel $width={122}>
          <PanelBody $left={4}>
            <ToolGrid $cols={2} $cell={57} $row={52} $gap="3px 2px">
              <Tool aria-label="类型属性" disabled><TypePropsIcon /></Tool>
              <Tool aria-label="族类别和族参数"><FamilyFolderIcon /></Tool>
              <Tool aria-label="属性" $on><PropertiesIcon /></Tool>
              <Tool aria-label="族类型"><FamilyTypesIcon /></Tool>
            </ToolGrid>
          </PanelBody>
          <PanelLabel>属性</PanelLabel>
        </Panel>
        <Panel $width={112}>
          <PanelBody $left={10}>
            <TallTool $width={54} disabled><PasteIcon />粘贴<Caret color="#8a8a8a" /></TallTool>
            <ToolGrid $cols={1} $cell={28} $row={36} $top={1} $left={13}><Tools items={clipTools} /></ToolGrid>
          </PanelBody>
          <PanelLabel>剪贴板</PanelLabel>
        </Panel>
        <Panel $width={164}>
          <PanelBody>
            <SplitColumn $left={11}>
              <SplitRow><LabelledTool><CutGeomIcon />剪切</LabelledTool><CaretButton aria-label="剪切选项" $width={32}><Caret /></CaretButton></SplitRow>
              <SplitRow><LabelledTool><JoinIcon />连接</LabelledTool><CaretButton aria-label="连接选项" $width={32}><Caret /></CaretButton></SplitRow>
            </SplitColumn>
            <SplitColumn $left={2}>
              <SplitRow><Tool aria-label="墙洞口"><WallOpeningIcon /></Tool></SplitRow>
              <SplitRow><Tool aria-label="拆分面"><SplitFaceIcon /></Tool><CaretButton aria-label="拆分面选项" $width={28}><Caret /></CaretButton></SplitRow>
            </SplitColumn>
          </PanelBody>
          <PanelLabel>几何图形</PanelLabel>
        </Panel>
        <Panel $width={356}>
          <PanelBody $left={5}>
            <ToolGrid $cols={4} $cell={58} $row={54}><Tools items={transformTools} /></ToolGrid>
            <ToolGrid $cols={3} $cell={38} $row={36} $top={1} $left={3}><Tools items={detailTools} /></ToolGrid>
          </PanelBody>
          <PanelLabel>修改</PanelLabel>
        </Panel>
        <Panel $width={82}>
          <PanelBody $left={5}>
            <div><Tools items={[['测量', MeasureIcon], ['对齐尺寸标注', DimensionIcon]]} width={56} /></div>
            <div>
              <CaretButton aria-label="测量选项" $width={18} $height={54}><Caret color="#707070" /></CaretButton>
              <CaretButton aria-label="标注选项" $width={18} $height={54}><Caret /></CaretButton>
            </div>
          </PanelBody>
          <PanelLabel>测量</PanelLabel>
        </Panel>
        <Panel $width={64}>
          <PanelBody $left={4}>
            <div><Tools items={[['创建组', CreateGroupIcon], ['创建类似', CreateSimilarIcon]]} width={58} /></div>
          </PanelBody>
          <PanelLabel>创建</PanelLabel>
        </Panel>
        <Panel $width={328}>
          <PanelBody $left={2} $edge={6} $align="center">
            <RoadTools>
              <Tools items={roadTools} width={58} />
              <Divider />
              <Tools items={[['铺装', LatticeIcon]]} width={58} />
              <Divider />
            </RoadTools>
          </PanelBody>
          <PanelLabel $tinted>场地道路</PanelLabel>
        </Panel>
        <Panel $width={126}>
          <PanelBody $left={1}>
            <TallTool $width={60}><EditSweepIcon />编辑<br />放样</TallTool>
            <TallTool $width={60}><VisibilityIcon /><span>可见性</span><span>设置</span></TallTool>
          </PanelBody>
          <PanelLabel $tinted>模式</PanelLabel>
        </Panel>
      </Ribbon>
      <OptionsBar>修改 | 空心 放样</OptionsBar>

      <Workspace>
        <Sidebar>
          <SideTitle>属性<CloseButton aria-label="关闭属性"><Cross /></CloseButton></SideTitle>
          <TypePreview aria-label="类型选择器"><Thumb><FamilyLogo /></Thumb><Caret w={12} color="#969a9a" /></TypePreview>
          <TypeRow>
            <SelectBox>
              <TypeSelect aria-label="图元"><option>窗 (空心) (1)</option></TypeSelect>
              <Icon w={13} h={8}><path d="M1.500 1L6.500 6L11.500 1" stroke="#444" strokeWidth="1.300" /></Icon>
            </SelectBox>
            <EditType disabled><EditTypeIcon />编辑类型</EditType>
          </TypeRow>
          <Properties>
            <PropTable>
              <colgroup><col width="152" /><col /><col width="19" /></colgroup>
              <tbody>
                <Group title="约束" />
                <Row id="plane" name="工作平面" dim><ValueInput id="plane" disabled defaultValue="<不关联>" /></Row>
                <Group title="标识数据" />
                <Row id="solid" name="实心/空心"><ValueInput id="solid" $active defaultValue="空心" /></Row>
                <Group title="其他" />
                <Row id="segments" name="轨线分割" action={<RowButton aria-label="关联族参数" />}><TickBox id="segments" type="checkbox" /></Row>
                <Row id="angle" name="最大线段角度" dim><ValueInput id="angle" disabled defaultValue="360.00°" /></Row>
              </tbody>
            </PropTable>
          </Properties>
        </Sidebar>
        <Main>
          <ViewTabs>
            <ViewTab><ViewTabButton><HomeIcon />外部</ViewTabButton></ViewTab>
            <ViewTab $active><ViewTabButton $active><CubeIcon />{'{三维}'}</ViewTabButton><CloseButton aria-label="关闭视图"><Cross /></CloseButton></ViewTab>
            <ViewTab><ViewTabButton><PlanIcon />参照标高</ViewTabButton></ViewTab>
          </ViewTabs>
          <Canvas><Model /></Canvas>
        </Main>
      </Workspace>
      <Annotations />
    </Page>
  );
}
